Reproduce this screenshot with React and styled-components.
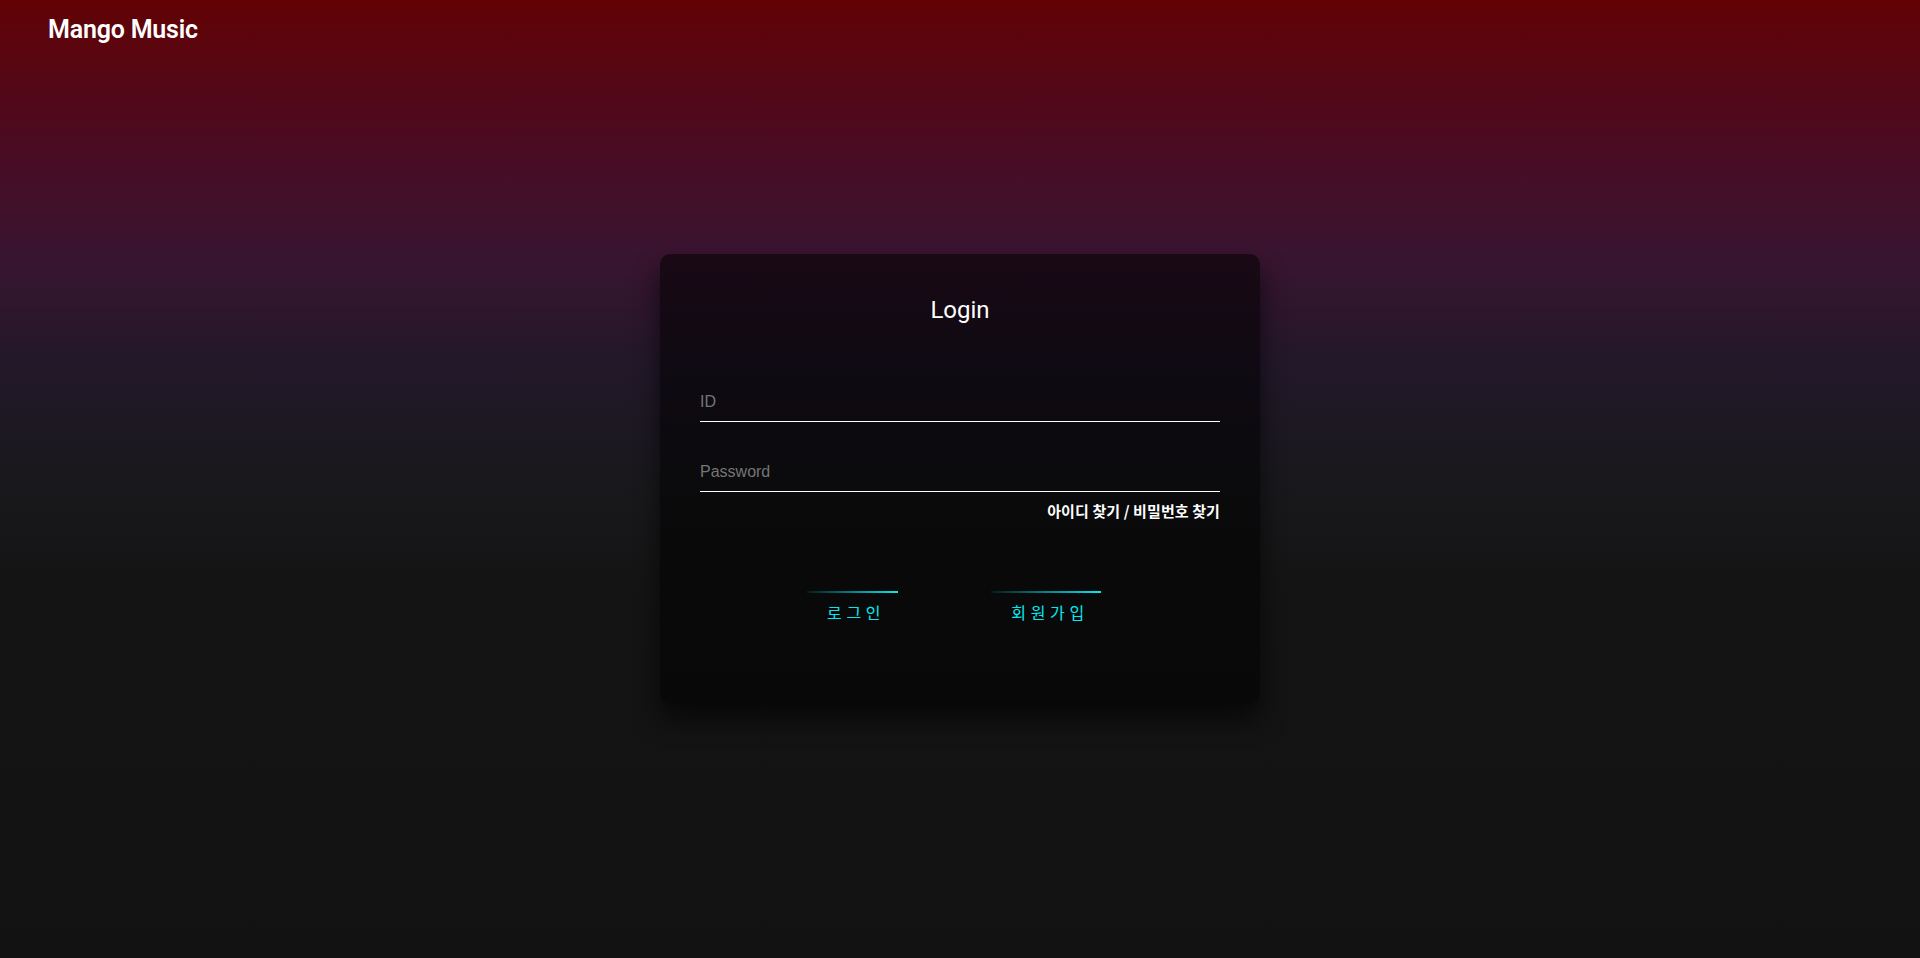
import React, { useState } from "react";
import styled, { createGlobalStyle } from "styled-components";

const GlobalStyle = createGlobalStyle`
  * {
    box-sizing: border-box;
  }

  html,
  body {
    margin: 0;
    padding: 0;
    height: 100%;
  }

  body {
    font-family: "Noto Sans CJK KR", "Noto Sans", sans-serif;
    background: #121212;
  }
`;

const Page = styled.div`
  min-height: 958px;
  display: flex;
  flex-direction: column;
  background: linear-gradient(
    180deg,
    #620205 0%,
    #4c0a20 14%,
    #3a1430 26%,
    #22182a 38%,
    #19181c 50%,
    #141414 62%,
    #121212 100%
  );
`;

const Header = styled.header`
  height: 58px;
  padding: 0 48px;
  display: flex;
  align-items: center;
  flex-shrink: 0;
`;

const Logo = styled.div`
  color: #fff;
  font-family: Roboto, "Liberation Sans", sans-serif;
  font-size: 25px;
  font-weight: 600;
  letter-spacing: -0.2px;
`;

const Main = styled.main`
  flex: 1;
  display: flex;
  align-items: center;
  justify-content: center;
  margin-top: -58px;
`;

const Card = styled.form`
  width: 600px;
  padding: 40px;
  background: rgba(0, 0, 0, 0.55);
  border-radius: 10px;
  box-shadow: 0 15px 25px rgba(0, 0, 0, 0.6);
  display: flex;
  flex-direction: column;
`;

const Title = styled.h2`
  margin: 0 0 57px;
  color: #fff;
  text-align: center;
  font-family: Roboto, "Liberation Sans", sans-serif;
  font-size: 24px;
  font-weight: 400;
  line-height: 32px;
`;

const Input = styled.input`
  width: 100%;
  padding: 10px 0;
  margin-bottom: ${(p) => p.$gap}px;
  font-family: "Liberation Sans", Arial, sans-serif;
  font-size: 16px;
  line-height: 18px;
  color: #fff;
  background: transparent;
  border: none;
  border-bottom: 1px solid #fff;
  border-radius: 0;
  outline: none;

  &::placeholder {
    color: #757575;
  }
`;

const FindLink = styled.a`
  align-self: flex-end;
  color: #fff;
  font-size: 15px;
  font-weight: 700;
  line-height: 20px;
  letter-spacing: 0.1px;
  text-decoration: none;
  cursor: pointer;
`;

const Actions = styled.div`
  display: flex;
  justify-content: center;
  gap: 86px;
  margin: 70px 0 31px;
  padding-right: 4px;
`;

const NeonButton = styled.button`
  position: relative;
  overflow: hidden;
  padding: 10px 20px;
  background: transparent;
  border: none;
  color: #03e9f4;
  font-family: "Noto Sans CJK KR", sans-serif;
  font-size: 16px;
  line-height: 22px;
  letter-spacing: 4.7px;
  cursor: pointer;

  &::before {
    content: "";
    position: absolute;
    top: 0;
    left: 0;
    width: 93%;
    height: 2px;
    background: linear-gradient(90deg, rgba(3, 233, 244, 0.08), #03e9f4);
  }
`;

export default function App() {
  const [form, setForm] = useState({ id: "", password: "" });

  const handleChange = (e) => {
    const { name, value } = e.target;
    setForm((prev) => ({ ...prev, [name]: value }));
  };

  return (
    <>
      <GlobalStyle />
      <Page>
        <Header>
          <Logo>Mango Music</Logo>
        </Header>
        <Main>
          <Card onSubmit={(e) => e.preventDefault()}>
            <Title>Login</Title>
            <Input
              name="id"
              placeholder="ID"
              value={form.id}
              onChange={handleChange}
              $gap={31}
            />
            <Input
              type="password"
              name="password"
              placeholder="Password"
              value={form.password}
              onChange={handleChange}
              $gap={9}
            />
            <FindLink>아이디 찾기 / 비밀번호 찾기</FindLink>
            <Actions>
              <NeonButton type="submit">로그인</NeonButton>
              <NeonButton type="button">회원가입</NeonButton>
            </Actions>
          </Card>
        </Main>
      </Page>
    </>
  );
}
